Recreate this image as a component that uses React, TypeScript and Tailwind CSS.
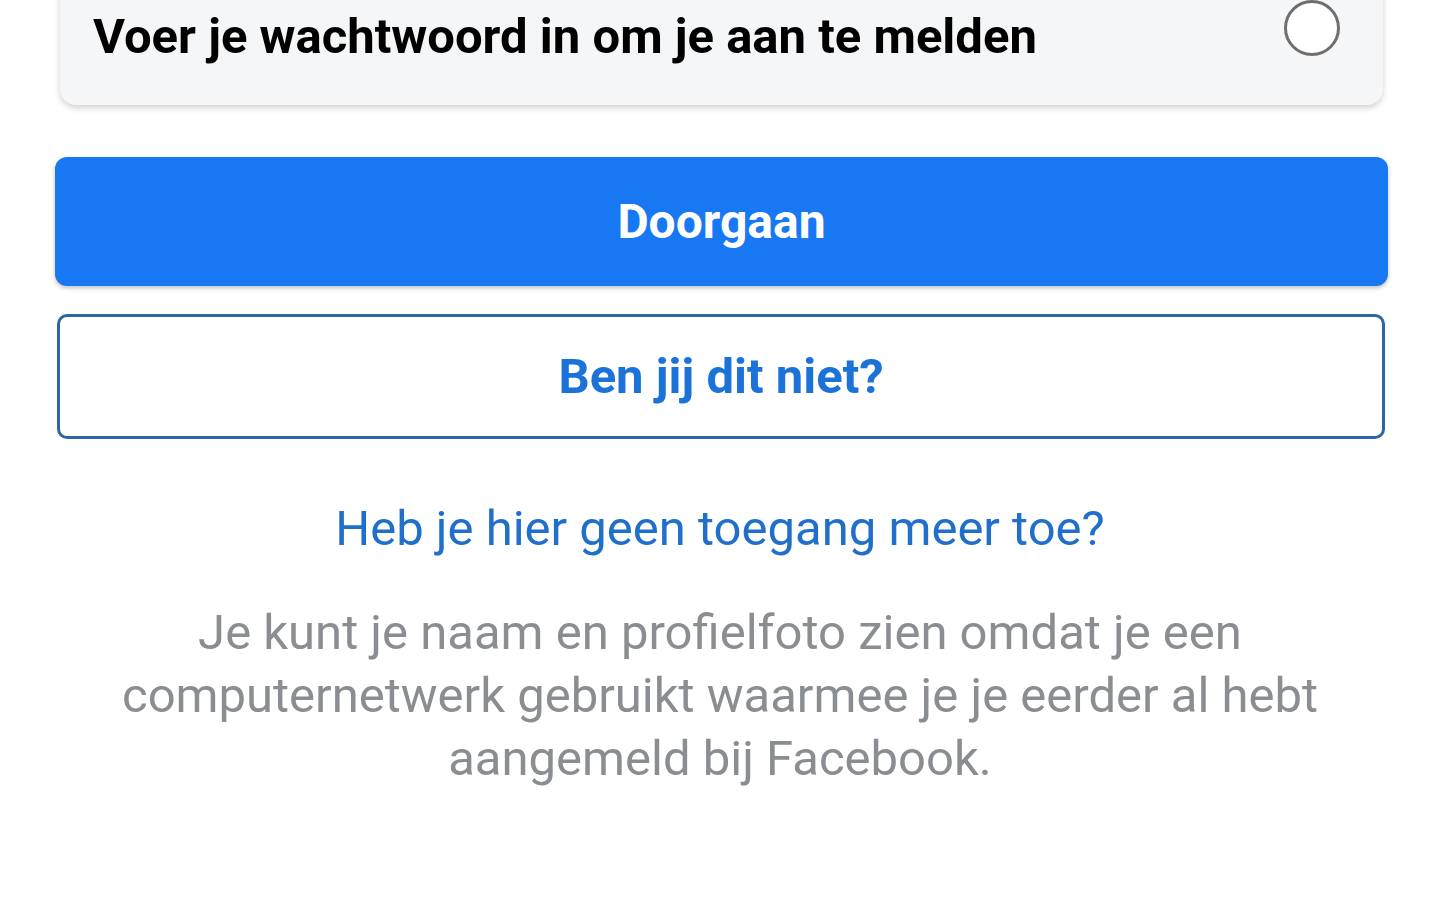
import React from "react";

export default function App() {
  return (
    <div className="w-[1440px] h-[898px] bg-white overflow-hidden" style={{ fontFamily: "Roboto, 'Noto Sans', sans-serif" }}>
      <div className="ml-[60px] mr-[57px] -mt-[40px] h-[145px] rounded-[16px] bg-[#f5f6f7] shadow-[0_3px_6px_rgba(0,0,0,0.18)] flex items-start pl-[33px] pr-[43px] pt-[38px]">
        <div className="flex-1 text-[49px] leading-[78px] font-bold text-black">Voer je wachtwoord in om je aan te melden</div>
        <div className="w-[56px] h-[56px] rounded-full border-[3px] border-[#6e6e6e] bg-white mt-[2px]"></div>
      </div>
      <div className="pl-[55px] pr-[52px] mt-[52px]">
        <div className="h-[129px] rounded-[12px] bg-[#1877f2] shadow-[0_2px_4px_rgba(0,0,0,0.25)] flex items-center justify-center text-white font-bold text-[48px]">
          Doorgaan
        </div>
        <div className="ml-[2px] mr-[3px] mt-[28px] h-[125px] rounded-[10px] border-[3px] border-[#2c66a6] flex items-center justify-center text-[#1b72d9] font-bold text-[49px]">
          Ben jij dit niet?
        </div>
      </div>
      <div className="mt-[62px] text-center text-[#1f6fcb] text-[49px] leading-[56px]">Heb je hier geen toegang meer toe?</div>
      <div className="mt-[44px] mx-auto w-[1260px] text-center text-[#8a8d91] text-[49px] leading-[63px]">
        Je kunt je naam en profielfoto zien omdat je een computernetwerk gebruikt waarmee je je eerder al hebt aangemeld bij Facebook.
      </div>
    </div>
  );
}
